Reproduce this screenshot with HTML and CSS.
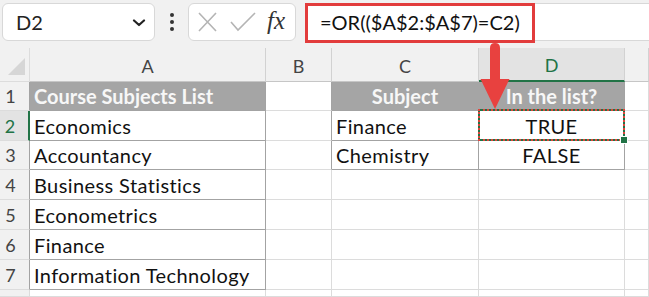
FILE: index.html
```html
<!DOCTYPE html>
<html lang="en">
<head>
    <meta charset="UTF-8">
    <title>OR formula - in the list</title>
    <link rel="stylesheet" href="styles.css">
</head>
<body>
    <div class="toolbar">
        <div class="namebox">
            <span>D2</span>
            <svg class="chev" width="14" height="8" viewBox="0 0 14 8"><path d="M2 1.5 L7 6 L12 1.5" fill="none" stroke="#222" stroke-width="2.2" stroke-linecap="round" stroke-linejoin="round"/></svg>
        </div>
        <div class="dots"><i></i><i></i><i></i></div>
        <div class="fxbox">
            <svg width="20" height="20" viewBox="0 0 20 20"><path d="M2 1 L19 19 M19 1 L2 19" stroke="#b4b4b4" stroke-width="1.6" fill="none"/></svg>
            <svg width="26" height="20" viewBox="0 0 26 20"><path d="M1 10 L8 18 L25 1" stroke="#b4b4b4" stroke-width="1.6" fill="none"/></svg>
            <span class="fx">fx</span>
        </div>
        <div class="formulabar">
            <div class="formula">=OR(($A$2:$A$7)=C2)</div>
        </div>
    </div>

    <div class="sheet">
        <div class="corner"><span class="tri"></span></div>
        <div class="ch">A</div>
        <div class="ch">B</div>
        <div class="ch">C</div>
        <div class="ch active">D</div>
        <div class="ch last"></div>

        <div class="rh edge">1</div>
        <div class="cell th tA">Course Subjects List</div>
        <div class="cell edge"></div>
        <div class="cell th thl">Subject</div>
        <div class="cell th tA center">In the list?</div>
        <div class="cell"></div>

        <div class="rh cur">2</div>
        <div class="cell tA">Economics</div>
        <div class="cell edge"></div>
        <div class="cell tA">Finance</div>
        <div class="cell tA center sel">TRUE<span class="handle"></span></div>
        <div class="cell"></div>

        <div class="rh edge">3</div>
        <div class="cell tA">Accountancy</div>
        <div class="cell edge"></div>
        <div class="cell tA">Chemistry</div>
        <div class="cell tA center">FALSE</div>
        <div class="cell"></div>

        <div class="rh edge">4</div>
        <div class="cell tA">Business Statistics</div>
        <div class="cell"></div>
        <div class="cell"></div>
        <div class="cell"></div>
        <div class="cell"></div>

        <div class="rh edge">5</div>
        <div class="cell tA">Econometrics</div>
        <div class="cell"></div>
        <div class="cell"></div>
        <div class="cell"></div>
        <div class="cell"></div>

        <div class="rh edge">6</div>
        <div class="cell tA">Finance</div>
        <div class="cell"></div>
        <div class="cell"></div>
        <div class="cell"></div>
        <div class="cell"></div>

        <div class="rh edge">7</div>
        <div class="cell tA">Information Technology</div>
        <div class="cell"></div>
        <div class="cell"></div>
        <div class="cell"></div>
        <div class="cell"></div>

        <div class="rh"></div>
        <div class="cell"></div>
        <div class="cell"></div>
        <div class="cell"></div>
        <div class="cell"></div>
        <div class="cell"></div>
    </div>

    <!-- red callout arrow from the formula down to D2 -->
    <svg class="arrow" width="30" height="70" viewBox="0 0 30 70">
        <path d="M10 6 Q10 1 15 1 Q20 1 20 6 L20 38 L10 38 Z" fill="#e8413f"/>
        <path d="M0.5 37 L29.5 37 L15 67 Z" fill="#e8413f"/>
    </svg>
</body>
</html>
```

FILE: styles.css
```css
body {
    margin: 0;
    width: 649px;
    height: 297px;
    overflow: hidden;
    background: #fff;
    font-family: Lato, "Open Sans", sans-serif;
    color: #111;
    position: relative;
}
.toolbar {
    height: 48px;
    background: #f1f1f1;
    display: flex;
    align-items: flex-start;
    padding: 3px 0 0 2px;
    box-sizing: border-box;
}
.namebox {
    width: 153px;
    height: 38px;
    background: #fff;
    border: 1px solid #d8d8d8;
    border-radius: 6px;
    box-sizing: border-box;
    display: flex;
    align-items: center;
    justify-content: space-between;
    padding: 0 8px 0 13px;
    font-size: 20px;
    color: #222;
}
.chev {
    margin-top: 2px;
}
.dots {
    width: 33px;
    height: 38px;
    display: flex;
    flex-direction: column;
    align-items: center;
    justify-content: center;
    gap: 3px;
}
.dots i {
    width: 4px;
    height: 4px;
    border-radius: 50%;
    background: #333;
}
.fxbox {
    width: 108px;
    height: 38px;
    background: #fff;
    border: 1px solid #d8d8d8;
    border-radius: 6px;
    box-sizing: border-box;
    display: flex;
    align-items: center;
    padding-left: 8px;
    gap: 13px;
}
.fx {
    font-family: "Liberation Serif", serif;
    font-style: italic;
    font-size: 25px;
    color: #333;
    margin-left: -2px;
    margin-top: -2px;
}
.formulabar {
    flex: 1;
    margin-left: 9px;
    height: 38px;
    background: #fff;
    border-top: 1px solid #d8d8d8;
    border-bottom: 1px solid #d8d8d8;
    box-sizing: border-box;
}
.formula {
    width: 230px;
    height: 40px;
    margin-top: -1px;
    border: 3px solid #e23c3c;
    box-sizing: border-box;
    background: #fff;
    font-size: 20px;
    line-height: 33px;
    padding-left: 12px;
    color: #111;
}
.sheet {
    display: grid;
    grid-template-columns: 30px 236px 66px 147px 146px 24px;
    grid-template-rows: 34px 29px 30px 29px 30px 30px 30px 30px 7px;
}
.sheet > div {
    box-sizing: border-box;
    border-right: 1px solid #dcdcdc;
    border-bottom: 1px solid #dcdcdc;
}
.corner {
    background: #f1f1f1;
    position: relative;
}
.tri {
    position: absolute;
    left: 8px;
    top: 10px;
    width: 0;
    height: 0;
    border-left: 17px solid transparent;
    border-bottom: 17px solid #d6d6d6;
}
.ch {
    background: #f1f1f1;
    color: #444;
    font-size: 18px;
    display: flex;
    align-items: center;
    justify-content: center;
    padding-top: 2px;
}
.sheet > .ch {
    border-right-color: #d2d2d2;
    border-bottom-color: #c6c6c6;
}
.sheet > .ch.active {
    background: #e3e3e3;
    color: #217346;
    border-bottom: 2px solid #217346;
}
.rh {
    background: #f1f1f1;
    color: #444;
    font-size: 18px;
    display: flex;
    align-items: center;
    justify-content: center;
    padding-right: 8px;
}
.sheet > .rh.cur {
    background: #e3e3e3;
    color: #217346;
    border-right: 2px solid #217346;
}
.cell {
    font-size: 20px;
    letter-spacing: 0.4px;
    display: flex;
    align-items: flex-end;
    padding: 0 4px 2px;
    line-height: 24px;
    white-space: nowrap;
}
.center {
    justify-content: center;
}
.sheet > .edge {
    border-right-color: #a3a3a3;
}
.sheet > .tA {
    border-right-color: #a3a3a3;
    border-bottom-color: #a3a3a3;
}
.sheet > .th {
    background: #a5a5a5;
    color: #f7f7f7;
    font-weight: bold;
    letter-spacing: 0;
}
.sheet > .thl {
    border-right-color: #a5a5a5;
    border-bottom-color: #a3a3a3;
    justify-content: center;
}
.sel {
    position: relative;
}
.sel::before,
.sel::after {
    content: "";
    position: absolute;
    top: -2px;
    left: -1px;
    right: -1px;
    bottom: -1px;
    border: 2px solid #217346;
}
.sel::after {
    border: 2px dotted #e0443c;
}
.handle {
    position: absolute;
    right: -4px;
    bottom: -4px;
    width: 6px;
    height: 6px;
    background: #217346;
    border: 1px solid #fff;
    z-index: 2;
}
.arrow {
    position: absolute;
    left: 480px;
    top: 42px;
}
```
